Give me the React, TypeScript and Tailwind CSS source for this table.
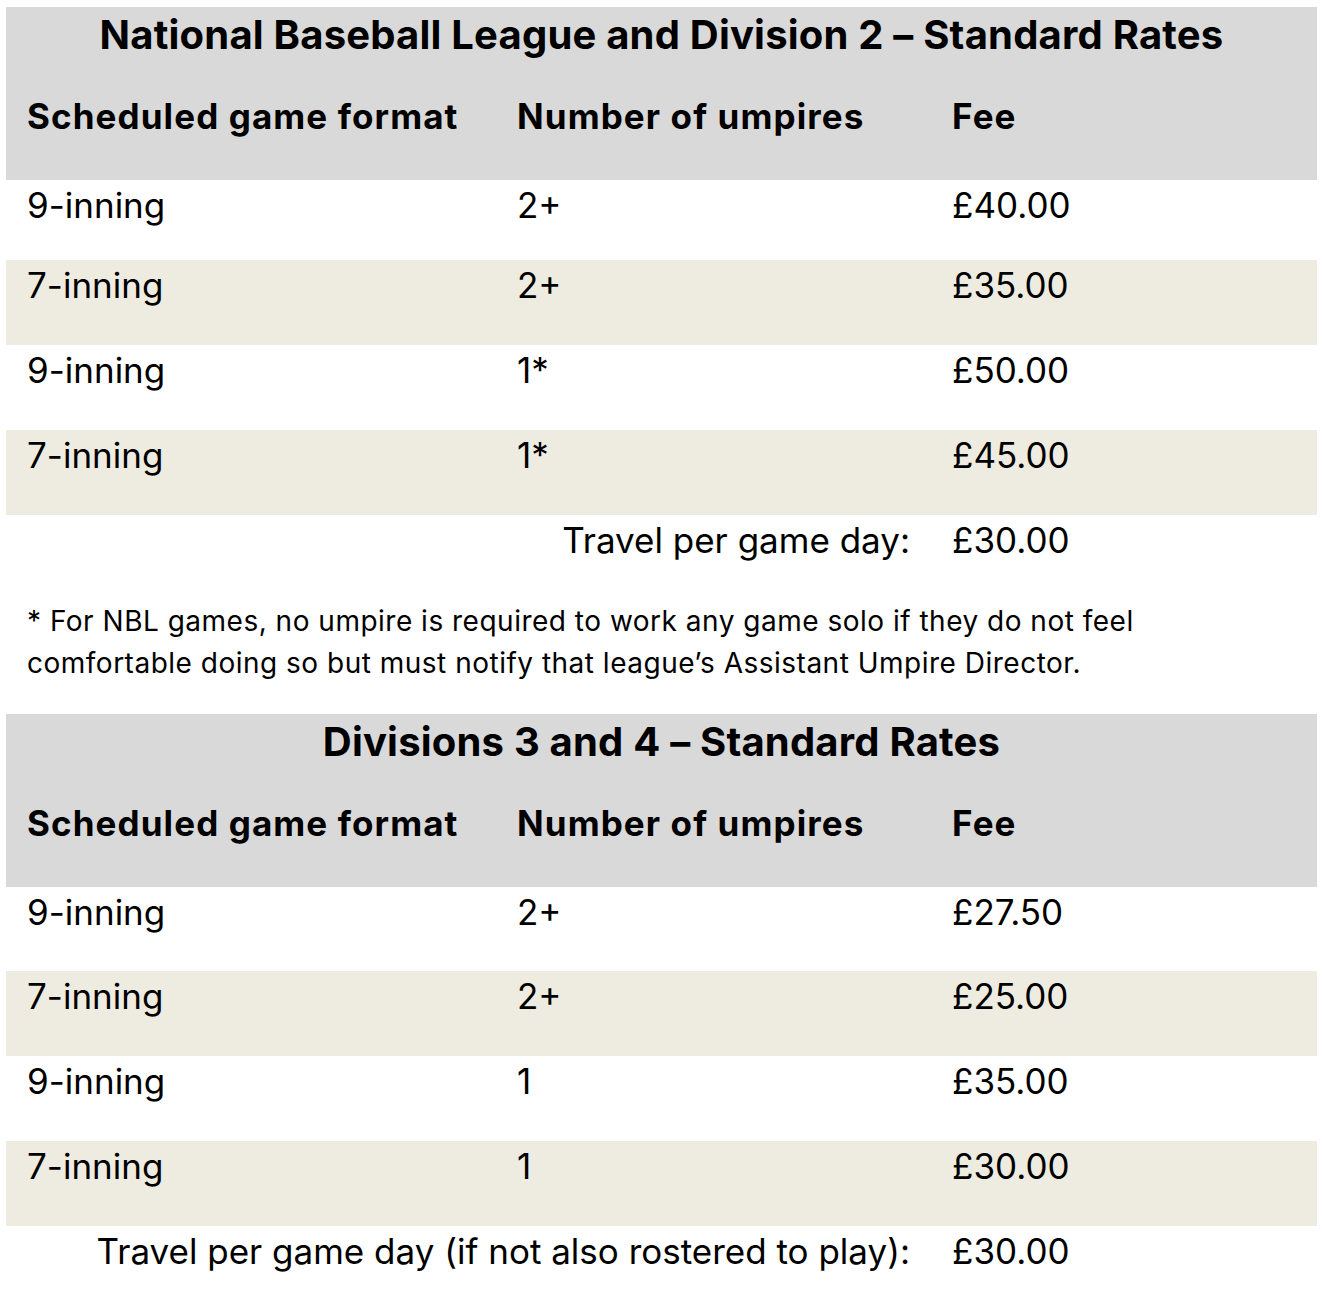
type Row = { format: string; umpires: string; fee: string };

const nblRows: Row[] = [
  { format: '9-inning', umpires: '2+', fee: '£40.00' },
  { format: '7-inning', umpires: '2+', fee: '£35.00' },
  { format: '9-inning', umpires: '1*', fee: '£50.00' },
  { format: '7-inning', umpires: '1*', fee: '£45.00' },
];

const divRows: Row[] = [
  { format: '9-inning', umpires: '2+', fee: '£27.50' },
  { format: '7-inning', umpires: '2+', fee: '£25.00' },
  { format: '9-inning', umpires: '1', fee: '£35.00' },
  { format: '7-inning', umpires: '1', fee: '£30.00' },
];

const cols = 'grid grid-cols-[490px_435px_1fr] pl-[21px]';

function RateTable({
  title,
  rows,
  travelLabel,
  firstRowClass,
}: {
  title: string;
  rows: Row[];
  travelLabel: string;
  firstRowClass: string;
}) {
  return (
    <div className="w-[1311px]">
      {/* grey header */}
      <div className="h-[173px] bg-[#d9d9d9]">
        <div className="h-[70px] pt-[4px] text-center text-[40px] font-bold leading-[48px] tracking-[0.2px]">
          {title}
        </div>
        <div className={`${cols} pt-[18px] text-[35px] font-bold leading-[42px] tracking-[1.1px]`}>
          <div>Scheduled game format</div>
          <div>Number of umpires</div>
          <div>Fee</div>
        </div>
      </div>

      {rows.map((r, i) => (
        <div
          key={i}
          className={`${cols} pt-[4px] text-[35px] leading-[42px] ${
            i === 0 ? firstRowClass : 'h-[85px]'
          } ${i % 2 === 1 ? 'bg-[#eeece1]' : 'bg-white'}`}
        >
          <div>{r.format}</div>
          <div>{r.umpires}</div>
          <div>{r.fee}</div>
        </div>
      ))}

      {/* travel */}
      <div className={`${cols} h-[85px] pt-[4px] text-[35px] leading-[42px]`}>
        <div className="col-span-2 pr-[42px] text-right">{travelLabel}</div>
        <div>£30.00</div>
      </div>
    </div>
  );
}

export default function App() {
  return (
    <div className="min-h-[1292px] bg-white pl-[6px] pt-[7px] text-black [font-family:Inter,'Noto_Sans',sans-serif]">
      <RateTable
        title="National Baseball League and Division 2 – Standard Rates"
        rows={nblRows}
        travelLabel="Travel per game day:"
        firstRowClass="h-[80px]"
      />

      <p className="h-[114px] pl-[21px] text-[28px] leading-[42px] tracking-[0.5px]">
        * For NBL games, no umpire is required to work any game solo if they do not feel
        <br />
        comfortable doing so but must notify that league’s Assistant Umpire Director.
      </p>

      <RateTable
        title="Divisions 3 and 4 – Standard Rates"
        rows={divRows}
        travelLabel="Travel per game day (if not also rostered to play):"
        firstRowClass="h-[84px]"
      />
    </div>
  );
}
